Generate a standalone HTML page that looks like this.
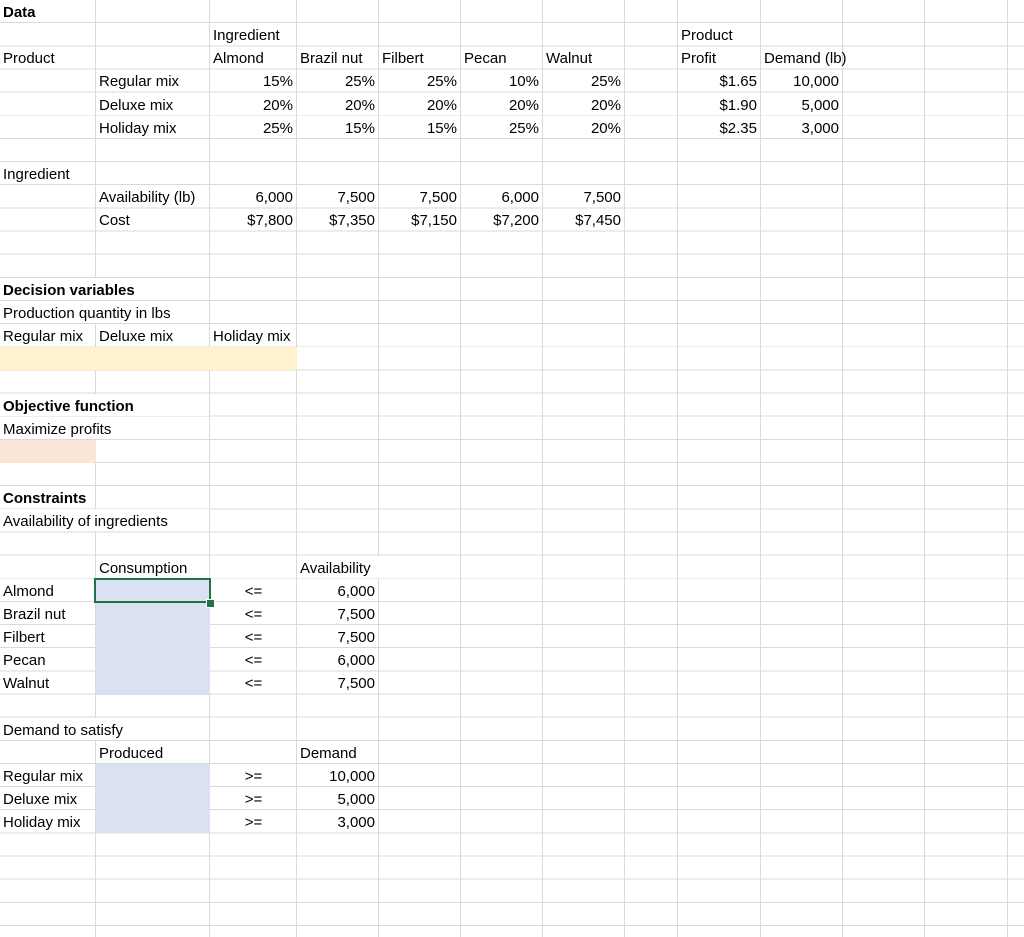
<!DOCTYPE html>
<html><head><meta charset="utf-8"><style>
html,body{margin:0;padding:0;background:#fff}
#s{position:relative;width:1024px;height:937px;overflow:hidden;font-family:"Liberation Sans",Arial,sans-serif;font-size:15px;color:#000;
background:repeating-linear-gradient(to bottom,transparent 0,transparent 22.15px,#d9d9d9 22.15px,#d9d9d9 23.15px)}
.v{position:absolute;top:0;width:1px;height:937px;background:#d9d9d9}
.f{position:absolute}
.c{position:absolute;height:22px;line-height:25px;padding:0 3px;white-space:nowrap;box-sizing:border-box}
.w{background:#fff}
.r{text-align:right;padding-right:4px}
.m{text-align:center}
b{font-weight:bold}
</style></head><body><div id="s">
<div class="v" style="left:95px"></div><div class="v" style="left:209px"></div><div class="v" style="left:296px"></div>
<div class="v" style="left:378px"></div><div class="v" style="left:460px"></div><div class="v" style="left:542px"></div>
<div class="v" style="left:624px"></div><div class="v" style="left:677px"></div><div class="v" style="left:760px"></div>
<div class="v" style="left:842px"></div><div class="v" style="left:924px"></div><div class="v" style="left:1007px"></div>

<div class="f" style="left:0;top:347.25px;width:297px;height:23.15px;background:#fff2cc"></div>
<div class="f" style="left:0;top:439.85px;width:96px;height:23.15px;background:#fce4d6"></div>
<div class="f" style="left:96px;top:578.75px;width:114px;height:115.75px;background:#d9e1f2"></div>
<div class="f" style="left:96px;top:763.95px;width:114px;height:69.45px;background:#d9e1f2"></div>
<div class="f" style="left:94px;top:578px;width:117px;height:25px;box-sizing:border-box;border:2px solid #217346"></div>
<div class="f" style="left:206px;top:599px;width:7px;height:7px;background:#217346;border:1px solid #fff"></div>

<div class="c" style="left:0;top:0"><b>Data</b></div>
<div class="c" style="left:210px;top:23.15px">Ingredient</div>
<div class="c" style="left:678px;top:23.15px">Product</div>
<div class="c" style="left:0;top:46.3px">Product</div>
<div class="c" style="left:210px;top:46.3px">Almond</div>
<div class="c" style="left:297px;top:46.3px">Brazil nut</div>
<div class="c" style="left:379px;top:46.3px">Filbert</div>
<div class="c" style="left:461px;top:46.3px">Pecan</div>
<div class="c" style="left:543px;top:46.3px">Walnut</div>
<div class="c" style="left:678px;top:46.3px">Profit</div>
<div class="c" style="left:761px;top:46.3px">Demand (lb)</div>

<div class="c" style="left:96px;top:69.45px">Regular mix</div>
<div class="c r" style="left:210px;width:87px;top:69.45px">15%</div>
<div class="c r" style="left:297px;width:82px;top:69.45px">25%</div>
<div class="c r" style="left:379px;width:82px;top:69.45px">25%</div>
<div class="c r" style="left:461px;width:82px;top:69.45px">10%</div>
<div class="c r" style="left:543px;width:82px;top:69.45px">25%</div>
<div class="c r" style="left:678px;width:83px;top:69.45px">$1.65</div>
<div class="c r" style="left:761px;width:82px;top:69.45px">10,000</div>

<div class="c" style="left:96px;top:92.6px">Deluxe mix</div>
<div class="c r" style="left:210px;width:87px;top:92.6px">20%</div>
<div class="c r" style="left:297px;width:82px;top:92.6px">20%</div>
<div class="c r" style="left:379px;width:82px;top:92.6px">20%</div>
<div class="c r" style="left:461px;width:82px;top:92.6px">20%</div>
<div class="c r" style="left:543px;width:82px;top:92.6px">20%</div>
<div class="c r" style="left:678px;width:83px;top:92.6px">$1.90</div>
<div class="c r" style="left:761px;width:82px;top:92.6px">5,000</div>

<div class="c" style="left:96px;top:115.75px">Holiday mix</div>
<div class="c r" style="left:210px;width:87px;top:115.75px">25%</div>
<div class="c r" style="left:297px;width:82px;top:115.75px">15%</div>
<div class="c r" style="left:379px;width:82px;top:115.75px">15%</div>
<div class="c r" style="left:461px;width:82px;top:115.75px">25%</div>
<div class="c r" style="left:543px;width:82px;top:115.75px">20%</div>
<div class="c r" style="left:678px;width:83px;top:115.75px">$2.35</div>
<div class="c r" style="left:761px;width:82px;top:115.75px">3,000</div>

<div class="c" style="left:0;top:162.05px">Ingredient</div>
<div class="c" style="left:96px;top:185.2px">Availability (lb)</div>
<div class="c r" style="left:210px;width:87px;top:185.2px">6,000</div>
<div class="c r" style="left:297px;width:82px;top:185.2px">7,500</div>
<div class="c r" style="left:379px;width:82px;top:185.2px">7,500</div>
<div class="c r" style="left:461px;width:82px;top:185.2px">6,000</div>
<div class="c r" style="left:543px;width:82px;top:185.2px">7,500</div>
<div class="c" style="left:96px;top:208.35px">Cost</div>
<div class="c r" style="left:210px;width:87px;top:208.35px">$7,800</div>
<div class="c r" style="left:297px;width:82px;top:208.35px">$7,350</div>
<div class="c r" style="left:379px;width:82px;top:208.35px">$7,150</div>
<div class="c r" style="left:461px;width:82px;top:208.35px">$7,200</div>
<div class="c r" style="left:543px;width:82px;top:208.35px">$7,450</div>

<div class="c w" style="left:0;width:209px;top:277.8px"><b>Decision variables</b></div>
<div class="c w" style="left:0;width:209px;top:300.95px">Production quantity in lbs</div>
<div class="c" style="left:0;top:324.1px">Regular mix</div>
<div class="c" style="left:96px;top:324.1px">Deluxe mix</div>
<div class="c" style="left:210px;top:324.1px">Holiday mix</div>

<div class="c w" style="left:0;width:209px;top:393.55px"><b>Objective function</b></div>
<div class="c w" style="left:0;width:209px;top:416.7px">Maximize profits</div>

<div class="c" style="left:0;top:486.15px"><b>Constraints</b></div>
<div class="c w" style="left:0;width:209px;top:509.3px">Availability of ingredients</div>

<div class="c" style="left:96px;top:555.6px">Consumption</div>
<div class="c w" style="left:297px;width:163px;top:555.6px">Availability</div>
<div class="c" style="left:0;top:578.75px">Almond</div>
<div class="c" style="left:0;top:601.9px">Brazil nut</div>
<div class="c" style="left:0;top:625.05px">Filbert</div>
<div class="c" style="left:0;top:648.2px">Pecan</div>
<div class="c" style="left:0;top:671.35px">Walnut</div>
<div class="c m" style="left:210px;width:87px;top:578.75px">&lt;=</div>
<div class="c m" style="left:210px;width:87px;top:601.9px">&lt;=</div>
<div class="c m" style="left:210px;width:87px;top:625.05px">&lt;=</div>
<div class="c m" style="left:210px;width:87px;top:648.2px">&lt;=</div>
<div class="c m" style="left:210px;width:87px;top:671.35px">&lt;=</div>
<div class="c r" style="left:297px;width:82px;top:578.75px">6,000</div>
<div class="c r" style="left:297px;width:82px;top:601.9px">7,500</div>
<div class="c r" style="left:297px;width:82px;top:625.05px">7,500</div>
<div class="c r" style="left:297px;width:82px;top:648.2px">6,000</div>
<div class="c r" style="left:297px;width:82px;top:671.35px">7,500</div>

<div class="c w" style="left:0;width:209px;top:717.65px">Demand to satisfy</div>
<div class="c" style="left:96px;top:740.8px">Produced</div>
<div class="c" style="left:297px;top:740.8px">Demand</div>
<div class="c" style="left:0;top:763.95px">Regular mix</div>
<div class="c" style="left:0;top:787.1px">Deluxe mix</div>
<div class="c" style="left:0;top:810.25px">Holiday mix</div>
<div class="c m" style="left:210px;width:87px;top:763.95px">&gt;=</div>
<div class="c m" style="left:210px;width:87px;top:787.1px">&gt;=</div>
<div class="c m" style="left:210px;width:87px;top:810.25px">&gt;=</div>
<div class="c r" style="left:297px;width:82px;top:763.95px">10,000</div>
<div class="c r" style="left:297px;width:82px;top:787.1px">5,000</div>
<div class="c r" style="left:297px;width:82px;top:810.25px">3,000</div>
</div></body></html>
